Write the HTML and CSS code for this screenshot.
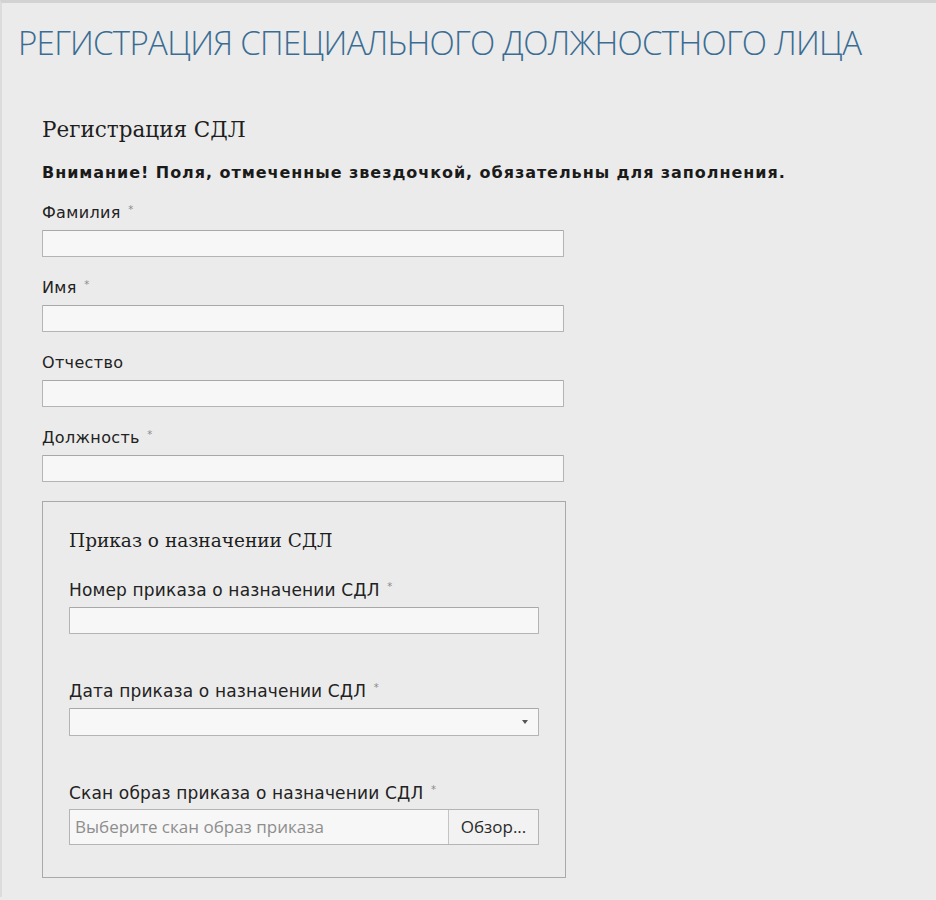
FILE: index.html
```html
<!DOCTYPE html>
<html lang="ru">
<head>
<meta charset="utf-8">
<title>Регистрация СДЛ</title>
<link rel="stylesheet" href="styles.css">
</head>
<body>
<div class="page">
  <h1 class="title">РЕГИСТРАЦИЯ СПЕЦИАЛЬНОГО ДОЛЖНОСТНОГО ЛИЦА</h1>
  <div class="form">
    <h2 class="form-title">Регистрация СДЛ</h2>
    <p class="warning">Внимание! Поля, отмеченные звездочкой, обязательны для заполнения.</p>

    <div class="field">
      <label class="label">Фамилия <span class="req">*</span></label>
      <div class="input"></div>
    </div>
    <div class="field">
      <label class="label">Имя <span class="req">*</span></label>
      <div class="input"></div>
    </div>
    <div class="field">
      <label class="label">Отчество</label>
      <div class="input"></div>
    </div>
    <div class="field">
      <label class="label">Должность <span class="req">*</span></label>
      <div class="input"></div>
    </div>

    <div class="group">
      <h3 class="group-title">Приказ о назначении СДЛ</h3>
      <div class="gfield first">
        <label class="label glabel">Номер приказа о назначении СДЛ <span class="req">*</span></label>
        <div class="input"></div>
      </div>
      <div class="gfield">
        <label class="label glabel">Дата приказа о назначении СДЛ <span class="req">*</span></label>
        <div class="input select"><span class="caret"></span></div>
      </div>
      <div class="gfield">
        <label class="label glabel">Скан образ приказа о назначении СДЛ <span class="req">*</span></label>
        <div class="file">
          <span class="file-text">Выберите скан образ приказа</span>
          <span class="file-btn">Обзор...</span>
        </div>
      </div>
    </div>
  </div>
</div>
</body>
</html>
```
FILE: styles.css
```css
html, body {
  margin: 0;
  padding: 0;
  background: #ebebeb;
}
body {
  border-top: 3px solid #d2d2d2;
  border-left: 2px solid #dcdcdc;
  min-height: 897px;
  box-sizing: border-box;
}
.page {
  padding-top: 20px;
}
.title {
  margin: 0;
  padding-left: 16px;
  font-family: "Open Sans", "DejaVu Sans", sans-serif;
  font-weight: 300;
  font-size: 33px;
  line-height: 40px;
  letter-spacing: -0.7px;
  color: #3b6d93;
  white-space: nowrap;
}
.form {
  margin-left: 40px;
  width: 524px;
}
.form-title {
  margin: 52px 0 0;
  font-family: "DejaVu Serif", "Liberation Serif", serif;
  font-weight: normal;
  font-size: 21.5px;
  line-height: 30px;
  color: #1e1e1e;
}
.warning {
  margin: 18px 0 0;
  font-family: "DejaVu Sans", Verdana, sans-serif;
  font-weight: bold;
  font-size: 16px;
  line-height: 20px;
  letter-spacing: 0.95px;
  color: #1a1a1a;
  white-space: nowrap;
}
.label {
  display: block;
  font-family: "DejaVu Sans", Verdana, sans-serif;
  font-size: 16px;
  line-height: 20px;
  letter-spacing: 0.35px;
  color: #222;
  white-space: nowrap;
}
.glabel {
  font-size: 17px;
  letter-spacing: 0.15px;
}
.req {
  font-size: 10px;
  letter-spacing: 0;
  color: #8a8a8a;
  vertical-align: top;
  position: relative;
  top: -3px;
  margin-left: 2px;
}
.field {
  margin-top: 21px;
}
.field:first-of-type {
  margin-top: 20px;
}
.input {
  margin-top: 7px;
  width: 522px;
  height: 27px;
  box-sizing: border-box;
  background: #f7f7f7;
  border: 1px solid #b4b4b4;
  border-top-color: #a8a8a8;
  border-radius: 1px;
}
.group {
  margin-top: 19px;
  width: 524px;
  box-sizing: border-box;
  border: 1px solid #a9a9a9;
  padding: 25px 26px 32px 26px;
}
.group-title {
  margin: 0;
  font-family: "DejaVu Serif", "Liberation Serif", serif;
  font-weight: normal;
  font-size: 18.5px;
  line-height: 28px;
  color: #1e1e1e;
}
.gfield {
  margin-top: 47px;
}
.gfield.first {
  margin-top: 25px;
}
.gfield .input {
  width: 470px;
  height: 27px;
}
.gfield .select {
  height: 28px;
  position: relative;
}
.caret {
  position: absolute;
  right: 10px;
  top: 11px;
  width: 0;
  height: 0;
  border-left: 3px solid transparent;
  border-right: 3px solid transparent;
  border-top: 4px solid #555;
}
.file {
  margin-top: 6px;
  width: 470px;
  height: 36px;
  box-sizing: border-box;
  display: flex;
  border: 1px solid #b4b4b4;
  background: #f7f7f7;
}
.file-text {
  flex: 1;
  padding-left: 5px;
  font-family: "Open Sans", sans-serif;
  font-size: 17px;
  line-height: 34px;
  color: #8e8e8e;
  white-space: nowrap;
}
.file-btn {
  width: 89px;
  border-left: 1px solid #c4c4c4;
  background: #f2f2f2;
  text-align: center;
  font-family: "Open Sans", sans-serif;
  font-size: 17px;
  line-height: 34px;
  color: #2a2a2a;
}
```
